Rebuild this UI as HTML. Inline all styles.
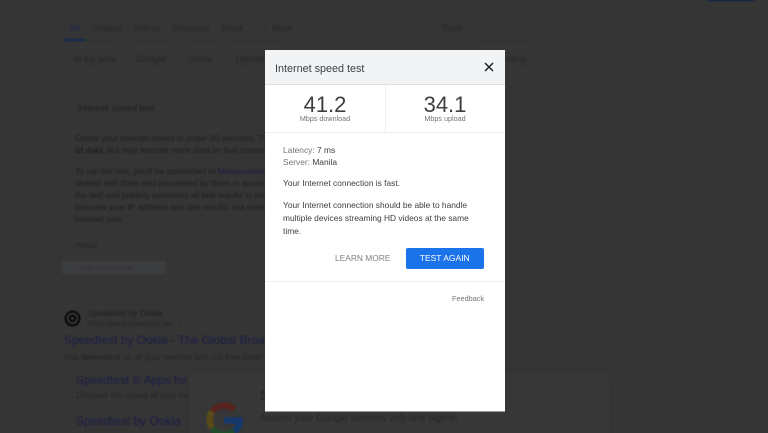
<!DOCTYPE html>
<html lang="en">
<head>
<meta charset="utf-8">
<style>
html,body{margin:0;padding:0;width:768px;height:433px;overflow:hidden;background:#353535}
body{font-family:"Liberation Sans",sans-serif;position:relative}
.t{position:absolute;white-space:nowrap;line-height:1}
#bg{position:absolute;left:0;top:0;width:768px;height:433px;filter:blur(.4px)}
#bg .d{color:#1f1f21}
#bg .g{color:#262628}
#bg .l{color:#1c1c48}
.chip{position:absolute;top:47px;height:25px;border:1px solid #3a3a3a;border-radius:13px;box-sizing:border-box}
#m{position:absolute;left:265px;top:50px;width:240px;height:361px;background:#fff;box-shadow:0 1px 0 #9a9a9a}
#m .t{color:#3c4043;filter:blur(.3px)}
</style>
</head>
<body>
<div id="bg">
  <div style="position:absolute;left:147px;top:-30px;width:320px;height:34px;border:1px solid #3a3a3a;border-radius:10px"></div>
  <div style="position:absolute;left:707px;top:-6px;width:48px;height:7px;background:#0b2548;border-radius:2px"></div>
  <div style="position:absolute;left:0;top:40px;width:768px;height:1px;background:#313131"></div>
  <div class="t" style="left:70px;top:23.5px;font-size:9px;color:#1c2450">All</div>
  <div style="position:absolute;left:64px;top:39px;width:21px;height:2px;background:#0f2c54"></div>
  <div class="t g" style="left:93px;top:23.5px;font-size:8.8px">Images</div>
  <div class="t g" style="left:133px;top:23.5px;font-size:8.8px">Videos</div>
  <div class="t g" style="left:172px;top:23.5px;font-size:8.8px">Shopping</div>
  <div class="t g" style="left:221px;top:23.5px;font-size:8.8px">News</div>
  <div class="t g" style="left:261px;top:23.5px;font-size:8.8px">⋮ More</div>
  <div class="t g" style="left:442px;top:23.5px;font-size:8.8px">Tools</div>

  <div class="chip" style="left:64px;width:59px"></div>
  <div class="t g" style="left:74px;top:55px;font-size:8.8px">In my area</div>
  <div class="chip" style="left:127px;width:48px"></div>
  <div class="t g" style="left:137px;top:55px;font-size:8.8px">Google</div>
  <div class="chip" style="left:180px;width:42px"></div>
  <div class="t g" style="left:189px;top:55px;font-size:8.8px">Ookla</div>
  <div class="chip" style="left:226px;width:60px"></div>
  <div class="t g" style="left:236px;top:55px;font-size:8.8px">Upload</div>
  <div class="chip" style="left:470px;width:67px"></div>
  <div class="t g" style="left:505px;top:55px;font-size:8.8px">ading</div>

  <div style="position:absolute;left:64px;top:92px;width:240px;height:178px;border:1px solid #393939;border-radius:4px;box-sizing:border-box"></div>
  <div style="position:absolute;left:65px;top:124px;width:240px;height:1px;background:#393939"></div>
  <div class="t d" style="left:77px;top:103px;font-size:9.4px">Internet speed test</div>
  <div class="t d" style="left:75px;top:134px;font-size:8.5px">Check your internet speed in under 30 seconds. The</div>
  <div class="t d" style="left:75px;top:146px;font-size:8.5px"><b>of data</b>, but may transfer more data on fast connect</div>
  <div class="t d" style="left:75px;top:167px;font-size:8.5px">To run the test, you'll be connected to <span style="color:#1c1c48">Measurement</span></div>
  <div class="t d" style="left:75px;top:179px;font-size:8.5px">shared with them and processed by them in accord</div>
  <div class="t d" style="left:75px;top:191px;font-size:8.5px">the test and publicly publishes all test results to pro</div>
  <div class="t d" style="left:75px;top:203px;font-size:8.5px">includes your IP address and test results, but doesn</div>
  <div class="t d" style="left:75px;top:215px;font-size:8.5px">internet user.</div>
  <div class="t g" style="left:75px;top:241px;font-size:8.5px">About</div>
  <div style="position:absolute;left:62px;top:261px;width:104px;height:13px;background:#3c3d3f"></div>
  <div class="t" style="left:80px;top:264px;font-size:7.5px;color:#313133">Edit screen limit</div>

  <svg style="position:absolute;left:64px;top:310px" width="17" height="17" viewBox="0 0 17 17">
    <circle cx="8.5" cy="8.5" r="8" fill="#0c0c0c"/>
    <circle cx="8.5" cy="8.5" r="4.8" fill="none" stroke="#404040" stroke-width="1.3"/>
    <circle cx="8.5" cy="8.5" r="1.6" fill="#333"/>
  </svg>
  <div class="t d" style="left:88px;top:309px;font-size:8.5px">Speedtest by Ookla</div>
  <div class="t g" style="left:88px;top:320px;font-size:7.4px">https://www.speedtest.net</div>
  <div class="t g" style="left:175px;top:319px;font-size:10px">⋮</div>
  <div class="t l" style="left:64px;top:335px;font-size:11.9px">Speedtest by Ookla - The Global Broa</div>
  <div class="t g" style="left:64px;top:352.5px;font-size:8.3px">Use <b>Speedtest</b> on all your devices with our free deskt</div>
  <div class="t l" style="left:76px;top:375px;font-size:11.8px">Speedtest ® Apps for</div>
  <div class="t g" style="left:76px;top:391px;font-size:8.4px">Discover the speed of your mo</div>
  <div class="t l" style="left:76px;top:415px;font-size:12px">Speedtest by Ookla</div>

  <div style="position:absolute;left:189px;top:373px;width:420px;height:80px;background:#373737;border-radius:6px;box-shadow:0 0 3px #303030"></div>
  <svg style="position:absolute;left:204px;top:400px" width="40" height="40" viewBox="0 0 40 40">
    <path d="M8.3 11.4 A14.5 14.5 0 0 1 30 9.6" fill="none" stroke="#58231f" stroke-width="6.5"/>
    <path d="M8.3 11.4 A14.5 14.5 0 0 0 8.3 28" fill="none" stroke="#584a18" stroke-width="6.5"/>
    <path d="M8.3 28 A14.5 14.5 0 0 0 30 31" fill="none" stroke="#204c2a" stroke-width="6.5"/>
    <path d="M20 20.5H35.6C35.6 25 33.5 28.8 30 31" fill="none" stroke="#15386c" stroke-width="6.5"/>
  </svg>
  <div class="t d" style="left:260px;top:388px;font-size:14px">Sign in</div>
  <div class="t g" style="left:260px;top:413.5px;font-size:9.8px">Access your Google services with one sign-in</div>
</div>

<div id="m">
  <div style="position:absolute;left:0;top:0;width:240px;height:35px;background:#f1f3f4;border-bottom:1px solid #e0e0e0;box-sizing:border-box"></div>
  <div class="t" style="left:10px;top:14px;font-size:10.8px">Internet speed test</div>
  <svg style="position:absolute;left:219px;top:11.5px" width="10" height="10" viewBox="0 0 10 10"><path d="M1 1L9 9M9 1L1 9" stroke="#202124" stroke-width="1.5" fill="none"/></svg>
  <div style="position:absolute;left:120px;top:35px;width:1px;height:47px;background:#eceef0"></div>
  <div style="position:absolute;left:0;top:82px;width:240px;height:1px;background:#eceef0"></div>
  <div class="t" style="left:0;width:120px;text-align:center;top:44px;font-size:22px">41.2</div>
  <div class="t" style="left:0;width:120px;text-align:center;top:65px;font-size:7.2px"><span style="color:#70757a">Mbps download</span></div>
  <div class="t" style="left:120px;width:120px;text-align:center;top:44px;font-size:22px">34.1</div>
  <div class="t" style="left:120px;width:120px;text-align:center;top:65px;font-size:7.2px"><span style="color:#70757a">Mbps upload</span></div>

  <div class="t" style="left:18px;top:96px;font-size:8.4px"><span style="color:#70757a">Latency:</span> 7 ms</div>
  <div class="t" style="left:18px;top:108px;font-size:8.4px"><span style="color:#70757a">Server:</span> Manila</div>
  <div class="t" style="left:18px;top:129px;font-size:8.4px">Your Internet connection is fast.</div>
  <div class="t" style="left:18px;top:151px;font-size:8.4px">Your Internet connection should be able to handle</div>
  <div class="t" style="left:18px;top:164px;font-size:8.4px">multiple devices streaming HD videos at the same</div>
  <div class="t" style="left:18px;top:177px;font-size:8.4px">time.</div>

  <div class="t" style="left:70px;top:204px;font-size:8.4px"><span style="color:#7d8288">LEARN MORE</span></div>
  <div style="position:absolute;left:140.5px;top:198px;width:78.5px;height:21px;background:#1a73e8;border-radius:2px"></div>
  <div class="t" style="left:140.5px;width:78.5px;text-align:center;top:204px;font-size:8.5px"><span style="color:#fff">TEST AGAIN</span></div>
  <div style="position:absolute;left:0;top:231px;width:240px;height:1px;background:#f0f0f0"></div>
  <div class="t" style="left:187px;top:245px;font-size:7.3px"><span style="color:#70757a">Feedback</span></div>
</div>
</body>
</html>
